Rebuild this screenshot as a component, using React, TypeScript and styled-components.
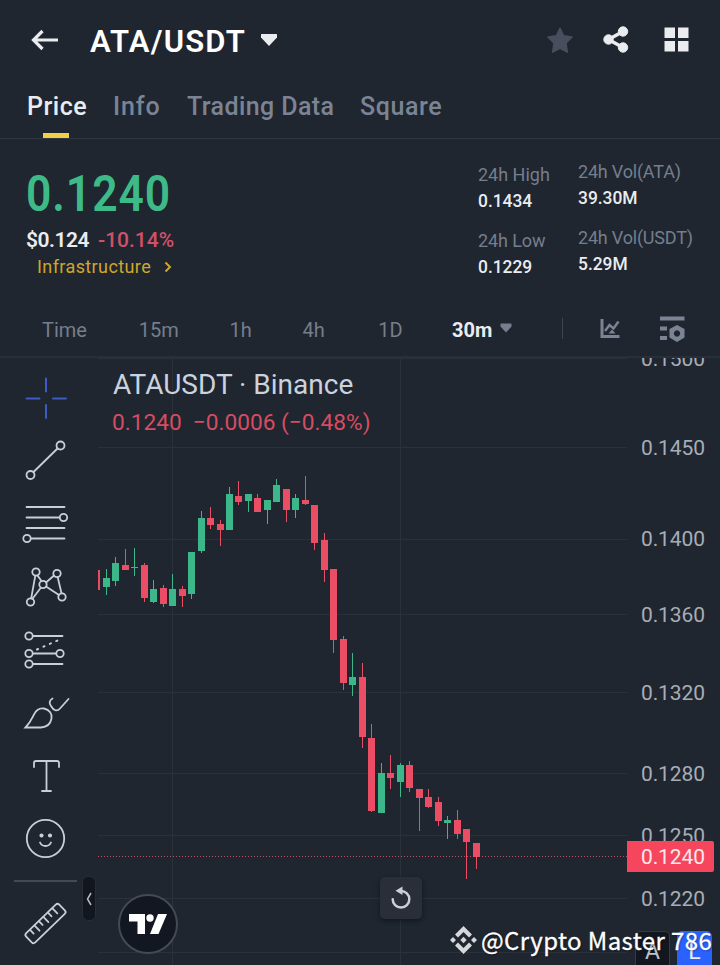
import React from "react";
import styled, { createGlobalStyle } from "styled-components";

const GlobalStyle = createGlobalStyle`
  * { box-sizing: border-box; }
  body { margin: 0; background: #1f262f; }
`;

const Page = styled.main`
  width: 720px;
  height: 965px;
  overflow: hidden;
  position: relative;
  display: flex;
  flex-direction: column;
  background: #1f262f;
  font-family: Roboto, "Liberation Sans", sans-serif;
  color: #eaecef;
`;

const Header = styled.header`
  height: 80px;
  flex: none;
  display: flex;
  align-items: center;
  padding: 0 29px 0 30px;
`;

const Title = styled.h1`
  margin: 3px 15px 0 32px;
  width: 155px;
  font-size: 31px;
  line-height: 40px;
  font-weight: 600;
  letter-spacing: 1.2px;
  white-space: nowrap;
  color: #fff;
`;

const HeaderActions = styled.div`
  margin-left: auto;
  display: flex;
  align-items: center;
  gap: 29px;
`;

const Icon = styled.svg`
  display: block;
  flex: none;
`;

const Tabs = styled.nav`
  height: 59px;
  flex: none;
  display: flex;
  gap: 27px;
  padding-left: 27px;
  border-bottom: 1px solid #2f3741;
`;

const Tab = styled.a<{ $active?: boolean; $width: number; $spacing: number }>`
  width: ${(p) => p.$width}px;
  display: flex;
  flex-direction: column;
  justify-content: space-between;
  padding-top: 12px;
  font-size: 25px;
  line-height: 30px;
  font-weight: 500;
  white-space: nowrap;
  letter-spacing: ${(p) => p.$spacing}px;
  color: ${(p) => (p.$active ? "#eaecef" : "#7b8494")};

  &::after {
    content: "";
    width: 26px;
    height: 5px;
    margin-left: 16px;
    background: ${(p) => (p.$active ? "#f0d04a" : "transparent")};
  }
`;

const Summary = styled.section`
  height: 164px;
  flex: none;
  display: flex;
  justify-content: space-between;
  padding: 0 27px 0 26px;
`;

const PriceBlock = styled.div`
  padding-top: 25px;
  display: flex;
  flex-direction: column;
`;

const BigPrice = styled.div`
  font-size: 50px;
  line-height: 60px;
  height: 60px;
  font-weight: 600;
  color: #3dba87;
  white-space: nowrap;
  letter-spacing: 1px;
  transform: scaleX(0.89);
  transform-origin: left;
`;

const ChangeRow = styled.div`
  margin-top: 3px;
  height: 26px;
  display: flex;
  gap: 9px;
  font-size: 21px;
  line-height: 26px;
`;

const FiatPrice = styled.span`
  width: 63px;
  font-weight: 600;
  letter-spacing: -0.5px;
`;

const Change = styled.span`
  font-weight: 500;
  color: #d2506a;
`;

const Category = styled.a`
  margin: 1px 0 0 11px;
  display: flex;
  align-items: center;
  gap: 13px;
  font-size: 18px;
  line-height: 25px;
  letter-spacing: 0.4px;
  color: #d0a72c;
`;

const Stats = styled.div`
  display: grid;
  grid-template-columns: 100px 115px;
`;

const StatColumn = styled.div<{ $top: number }>`
  padding-top: ${(p) => p.$top}px;
  display: flex;
  flex-direction: column;
  gap: 14px;
`;

const Stat = styled.div`
  height: 52px;
`;

const StatLabel = styled.div<{ $spacing?: number }>`
  font-size: 18px;
  line-height: 26px;
  white-space: nowrap;
  letter-spacing: ${(p) => p.$spacing ?? 0}px;
  color: #757e8c;
`;

const StatValue = styled.div`
  font-size: 19px;
  line-height: 26px;
  font-weight: 500;
  transform: scaleX(0.915);
  transform-origin: left;
`;

const Intervals = styled.nav`
  height: 53px;
  flex: none;
  display: flex;
  align-items: center;
  padding: 0 34px 0 42px;
  font-size: 20px;
  line-height: 24px;
  color: #757e8c;
`;

const Interval = styled.span<{ $width: number; $active?: boolean }>`
  width: ${(p) => p.$width}px;
  font-weight: ${(p) => (p.$active ? 700 : 400)};
  color: ${(p) => (p.$active ? "#eaecef" : "#757e8c")};
`;

const IntervalCaret = styled(Icon)`
  margin-top: -3px;
`;

const Divider = styled.i`
  width: 1px;
  height: 21px;
  margin: -2px 37px 0 50px;
  background: #3b4450;
`;

const StudyIcons = styled.div`
  display: flex;
  align-items: center;
  gap: 38px;
  margin-top: -1px;
`;

const ChartArea = styled.section`
  flex: 1;
  min-height: 0;
  display: grid;
  grid-template-columns: 98px 622px;
  border-top: 2px solid #282f39;
  position: relative;
`;

const Tools = styled.aside`
  display: flex;
  flex-direction: column;
  align-items: flex-start;
  padding: 9px 0 0 14px;
`;

const ToolButton = styled.span`
  height: 62.85px;
  width: 63px;
  display: grid;
  place-items: center;
`;

const ToolRule = styled.i`
  width: 63px;
  height: 2px;
  margin: 10px 0 11px;
  background: #434a55;
`;

const Plot = styled.div`
  position: relative;
  min-width: 0;
`;

const PlotSvg = styled.svg`
  display: block;
`;

const AxisText = styled.text<{ $tone?: string }>`
  font-family: Roboto, sans-serif;
  font-size: 21px;
  fill: ${(p) => p.$tone ?? "#a7adb8"};
`;

const Legend = styled.div`
  position: absolute;
  left: 14px;
  top: 8px;
  white-space: nowrap;
`;

const LegendTitle = styled.div`
  padding-left: 1px;
  font-size: 28px;
  line-height: 38px;
  color: #ccd2dd;
`;

const LegendValues = styled.div`
  margin-top: 1px;
  display: flex;
  gap: 11px;
  font-size: 22.7px;
  line-height: 36px;
  color: #d64c62;
`;

const CollapseHandle = styled.button`
  position: absolute;
  left: 82px;
  top: 518px;
  width: 14px;
  height: 45px;
  padding: 0;
  border: 1px solid #282d39;
  border-radius: 6px;
  background: #12161f;
  display: grid;
  place-items: center;
`;

const LogoBadge = styled.div`
  position: absolute;
  left: 20px;
  top: 536px;
  width: 60px;
  height: 60px;
  border: 2px solid #454955;
  border-radius: 50%;
  background: #131722;
  display: grid;
  place-items: center;
`;

const ResetButton = styled.button`
  position: absolute;
  left: 282px;
  top: 519px;
  width: 42px;
  height: 42px;
  padding: 0;
  border: 0;
  border-radius: 5px;
  background: #2a2e39;
  box-shadow: 0 2px 5px rgba(0, 0, 0, 0.4);
  display: grid;
  place-items: center;
`;

const ScaleButtons = styled.div`
  position: absolute;
  left: 537px;
  top: 573px;
  display: flex;
  gap: 7px;
`;

const ScaleButton = styled.button<{ $on?: boolean }>`
  width: 35px;
  height: 42px;
  padding: 0;
  border: 1px solid ${(p) => (p.$on ? "#2962ff" : "#353b46")};
  border-radius: 5px;
  background: ${(p) => (p.$on ? "#2962ff" : "#12161f")};
  color: ${(p) => (p.$on ? "#e6ebf7" : "#bcc1ca")};
  font-family: Roboto, sans-serif;
  font-size: 23px;
  line-height: 38px;
`;

const Signature = styled.div`
  position: absolute;
  left: 450px;
  top: 922px;
  display: flex;
  align-items: center;
  gap: 4px;
  white-space: nowrap;
  font-family: "Noto Sans CJK SC", sans-serif;
  font-size: 24px;
  line-height: 36px;
  letter-spacing: 0.4px;
  color: #fff;
  -webkit-text-stroke: 0.3px #fff;
  text-shadow: 1px 1px 2px rgba(0, 0, 0, 0.4);
`;

const gridLines = [358.5, 447.5, 539.5, 614.5, 692.5, 773.5, 835.5, 898.5, 952.5];

const axisLabels: [string, number][] = [
  ["0.1500", 366],
  ["0.1450", 455],
  ["0.1400", 546],
  ["0.1360", 622],
  ["0.1320", 700],
  ["0.1280", 781],
  ["0.1250", 843],
  ["0.1220", 906],
];

// left edge, wick top, body top, body bottom, wick bottom, rising
const candles: [number, number, number, number, number, boolean][] = [
  [103, 569, 578, 587, 595, true],
  [112, 557, 563, 581, 586, true],
  [122, 549, 565, 570, 570, false],
  [131, 548, 567, 568, 576, true],
  [141, 563, 565, 598, 602, false],
  [150, 580, 589, 602, 603, true],
  [160, 585, 588, 604, 607, false],
  [169, 574, 589, 606, 606, true],
  [179, 586, 589, 596, 607, false],
  [188, 552, 552, 594, 599, true],
  [198, 511, 518, 551, 553, true],
  [207, 507, 518, 525, 529, false],
  [217, 520, 524, 530, 546, false],
  [226, 487, 494, 530, 530, true],
  [235, 481, 496, 502, 505, false],
  [245, 494, 494, 501, 512, true],
  [254, 494, 498, 512, 512, false],
  [264, 500, 500, 510, 524, true],
  [273, 479, 485, 502, 502, true],
  [283, 489, 489, 510, 522, false],
  [292, 494, 498, 510, 518, true],
  [302, 476, 500, 504, 505, false],
  [311, 505, 505, 543, 550, false],
  [321, 533, 540, 570, 582, false],
  [330, 569, 569, 640, 653, false],
  [340, 636, 639, 683, 690, false],
  [349, 653, 677, 685, 696, true],
  [359, 663, 677, 737, 748, false],
  [368, 724, 738, 811, 812, false],
  [378, 763, 773, 813, 813, true],
  [387, 755, 773, 778, 789, false],
  [397, 763, 765, 782, 797, true],
  [406, 761, 765, 788, 792, false],
  [416, 789, 789, 798, 831, false],
  [425, 789, 797, 807, 808, false],
  [435, 797, 802, 821, 826, false],
  [444, 816, 820, 823, 839, true],
  [454, 810, 820, 834, 839, false],
  [463, 829, 829, 842, 879, false],
  [473, 843, 843, 857, 869, false],
];

function Chart() {
  return (
    <PlotSvg width={622} height={607} viewBox="98 358 622 607">
      <g stroke="#2a313b">
        {gridLines.map((y) => (
          <path key={y} d={`M98 ${y}H627`} />
        ))}
        <path d="M172.5 358V965M400.5 358V965" />
      </g>
      <path d="M98 856.5H627" stroke="#b05566" strokeDasharray="1 2" />
      <rect x={98} y={570} width={2} height={20} fill="#e94b62" />
      {candles.map(([x, high, top, bottom, low, rising]) => (
        <g key={x} fill={rising ? "#3bb78a" : "#eb4d64"}>
          <rect x={x + 3} y={high} width={1} height={low - high} />
          <rect x={x} y={top} width={7} height={bottom - top} />
        </g>
      ))}
      {axisLabels.map(([label, y]) => (
        <AxisText key={label} x={641} y={y} textLength={64}>
          {label}
        </AxisText>
      ))}
      <path d="M627 841h85a2 2 0 0 1 2 2v27a2 2 0 0 1-2 2h-85z" fill="#f6465d" />
      <AxisText x={641} y={864} textLength={64} $tone="#fbe9ec">
        0.1240
      </AxisText>
    </PlotSvg>
  );
}

const toolIcons: React.ReactNode[] = [
  <g key="cross" stroke="#3d5cc4" strokeWidth={2}>
    <path d="M32 11.500v13M32 38v13M12.500 31.500h13M39 31.500h13" />
  </g>,
  <g key="line">
    <circle cx={16.500} cy={45} r={4} />
    <circle cx={46.500} cy={15.500} r={4} />
    <path d="M19.500 42 43.500 18.500" />
  </g>,
  <g key="fib">
    <path d="M12.500 14h38M12.500 24.500h33M12.500 35h38M17 45.500h33.500" />
    <circle cx={49.500} cy={24.500} r={3.700} />
    <circle cx={13} cy={45.500} r={3.700} />
  </g>,
  <g key="pattern">
    <circle cx={22} cy={16} r={3.700} />
    <circle cx={43} cy={17.500} r={3.700} />
    <circle cx={29} cy={28.500} r={3.700} />
    <circle cx={16.500} cy={46} r={3.700} />
    <circle cx={48} cy={41} r={3.700} />
    <path d="M21.300 19.700 17.200 42.300M23.500 19.500 27.500 25M32 26.500 40 19.500M26.800 31.700 18.500 42.700M32 30.500 45 39M43.700 21.200 47.500 37.200" />
  </g>,
  <g key="forecast">
    <path d="M19 18h29.500M19 35.500h23M19 46h29.500" />
    <path d="M23 31.500 47 21" strokeDasharray="1.200 5.800" strokeWidth={2} />
    <circle cx={15} cy={18} r={3.700} />
    <circle cx={15} cy={35.500} r={3.700} />
    <circle cx={46} cy={35.500} r={3.700} />
    <circle cx={15} cy={46} r={3.700} />
  </g>,
  <g key="brush">
    <path d="M11.500 46.500C17 41 18 37 20 33.500C22 29 26 27 30 27.500C35.500 28.500 38.500 33 37.500 37.500C36.500 43 33 46 27 46.500Z" />
    <path d="M38.500 17.500C35 19.500 35 22.500 37 25C39.500 29.500 43 31 46 27.500L54.500 18" />
  </g>,
  <g key="text">
    <path d="M20 23v-4q0-2 2-2h21q2 0 2 2v4M32.500 17v30M28 47h9" />
  </g>,
  <g key="emoji">
    <circle cx={31.500} cy={31.500} r={18.700} />
    <circle cx={27.500} cy={28.500} r={1.200} fill="#c9ced8" />
    <circle cx={36} cy={28.500} r={1.200} fill="#c9ced8" />
    <path d="M26 35.500q1.500 3.500 5.500 3.500t5.500-3.500" />
  </g>,
];

const ToolSvg = ({ children }: { children: React.ReactNode }) => (
  <Icon width={63} height={63} viewBox="0 0 63 63" fill="none" stroke="#c9ced8" strokeWidth={1.800} strokeLinecap="round">
    {children}
  </Icon>
);

const tabs = [
  { label: "Price", width: 59, spacing: 0.5, active: true },
  { label: "Info", width: 47, spacing: 0.9 },
  { label: "Trading Data", width: 146, spacing: 0.4 },
  { label: "Square", width: 82, spacing: 0.6 },
];

const intervals: [string, number][] = [
  ["Time", 97],
  ["15m", 91],
  ["1h", 73],
  ["4h", 76],
  ["1D", 74],
];

export default function App() {
  return (
    <>
      <GlobalStyle />
      <Page>
        <Header>
          <Icon width={28} height={24} viewBox="0 0 28 24" fill="none" stroke="#eaecef" strokeWidth={3.200}>
            <path d="M12.500 3 3.500 12l9 9M3.500 12H28" />
          </Icon>
          <Title>ATA/USDT</Title>
          <Icon width={18} height={14} viewBox="0 0 18 14" fill="#eaecef">
            <path d="M1.500 1h15q.5 0 .5.500v3L9 13 1 4.500v-3q0-.5.500-.5z" />
          </Icon>
          <HeaderActions>
            <Icon width={28} height={28} viewBox="0 0 28 28" fill="#474f5e" stroke="#474f5e" strokeWidth={1.500} strokeLinejoin="round">
              <path d="M14 2.200 17.600 9.800 26 11 20 17 21.400 26.200 14 22.300 6.600 26.200 8 17 2 11 10.400 9.800z" />
            </Icon>
            <Icon width={28} height={28} viewBox="0 0 28 28" fill="#eaecef" stroke="#eaecef">
              <circle cx={5.500} cy={13.500} r={4.700} />
              <circle cx={20} cy={5.500} r={4.700} />
              <circle cx={20} cy={21.500} r={4.700} />
              <path d="M20 5.500 5.500 13.500 20 21.500" fill="none" strokeWidth={3.500} />
            </Icon>
            <Icon width={31} height={28} viewBox="0 0 31 28" fill="#eaecef">
              <path d="M4.500 1.500H15V12H4.500zM18 1.500h10.500V12H18zM4.500 15H15v10.500H4.500zM18 15h10.500v10.500H18z" />
            </Icon>
          </HeaderActions>
        </Header>

        <Tabs>
          {tabs.map((t) => (
            <Tab key={t.label} $width={t.width} $spacing={t.spacing} $active={t.active}>
              {t.label}
            </Tab>
          ))}
        </Tabs>

        <Summary>
          <PriceBlock>
            <BigPrice>0.1240</BigPrice>
            <ChangeRow>
              <FiatPrice>$0.124</FiatPrice>
              <Change>-10.14%</Change>
            </ChangeRow>
            <Category>
              Infrastructure
              <Icon width={8} height={12} viewBox="0 0 8 12" fill="none" stroke="#d0a72c" strokeWidth={2}>
                <path d="M1.500 1.500 6 6 1.500 10.500" />
              </Icon>
            </Category>
          </PriceBlock>
          <Stats>
            <StatColumn $top={23}>
              <Stat>
                <StatLabel>24h High</StatLabel>
                <StatValue>0.1434</StatValue>
              </Stat>
              <Stat>
                <StatLabel $spacing={-0.1}>24h Low</StatLabel>
                <StatValue>0.1229</StatValue>
              </Stat>
            </StatColumn>
            <StatColumn $top={20}>
              <Stat>
                <StatLabel $spacing={-0.2}>24h Vol(ATA)</StatLabel>
                <StatValue>39.30M</StatValue>
              </Stat>
              <Stat>
                <StatLabel $spacing={-0.2}>24h Vol(USDT)</StatLabel>
                <StatValue>5.29M</StatValue>
              </Stat>
            </StatColumn>
          </Stats>
        </Summary>

        <Intervals>
          {intervals.map(([label, width]) => (
            <Interval key={label} $width={width}>
              {label}
            </Interval>
          ))}
          <Interval $width={48} $active>
            30m
          </Interval>
          <IntervalCaret width={12} height={10} viewBox="0 0 12 10" fill="#757e8c">
            <path d="M.5.500h11v3L6 9.500.5 3.500z" />
          </IntervalCaret>
          <Divider />
          <StudyIcons>
            <Icon width={22} height={20} viewBox="0 0 22 20" fill="none" stroke="#7b8494" strokeWidth={3}>
              <path d="M2 0v17.500H19.500" />
              <path d="M5 12 9.500 6l4 3.500L18.500 2.500" strokeWidth={2.500} />
              <path d="M8.500 14.500 12 10.500 15.500 14.500z" fill="#7b8494" stroke="none" />
            </Icon>
            <Icon width={26} height={26} viewBox="0 0 26 26" fill="#7b8494">
              <path d="M0 .5h24.500v4H0zM0 10.500h7v4H0zM0 20h7v4H0z" />
              <path fillRule="evenodd" d="M17 9 24.500 13v8.500L17 26l-7.500-4.500V13zM17 14.300a3.200 3.200 0 1 0 .01 0z" />
            </Icon>
          </StudyIcons>
        </Intervals>

        <ChartArea>
          <Tools>
            {toolIcons.map((icon, i) => (
              <ToolButton key={i}>
                <ToolSvg>{icon}</ToolSvg>
              </ToolButton>
            ))}
            <ToolRule />
            <ToolButton>
              <ToolSvg>
                <g transform="translate(31.500 30.500) rotate(-44)">
                  <rect x={-23} y={-6.500} width={46} height={13} rx={2.500} />
                  <path d="M-15.500-6v5M-9.300-6v7M-3.100-6v5M3.100-6v7M9.300-6v5M15.500-6v7" />
                </g>
              </ToolSvg>
            </ToolButton>
          </Tools>
          <Plot>
            <Chart />
            <Legend>
              <LegendTitle>ATAUSDT · Binance</LegendTitle>
              <LegendValues>
                <span>0.1240</span>
                <span>−0.0006 (−0.48%)</span>
              </LegendValues>
            </Legend>
            <LogoBadge>
              <Icon width={38} height={20} viewBox="0 0 38 20" fill="#fff">
                <path d="M0 0h16v20H8.500V7.500H0z" />
                <circle cx={21} cy={4} r={3.700} />
                <path d="M29 0h9l-8.500 20h-8.500z" />
              </Icon>
            </LogoBadge>
            <ResetButton>
              <Icon width={24} height={24} viewBox="0 0 24 24" fill="none" stroke="#c9ced8" strokeWidth={2.500} strokeLinecap="round">
                <path d="M12 5A8.300 8.300 0 1 1 3.700 13.300" />
                <path d="M13.500.500v8.500L6.500 4.800z" fill="#c9ced8" stroke="none" />
              </Icon>
            </ResetButton>
            <ScaleButtons>
              <ScaleButton>A</ScaleButton>
              <ScaleButton $on>L</ScaleButton>
            </ScaleButtons>
          </Plot>
          <CollapseHandle>
            <Icon width={6} height={14} viewBox="0 0 6 14" fill="none" stroke="#b4bac6" strokeWidth={1.500}>
              <path d="M5 1 1.500 7 5 13" />
            </Icon>
          </CollapseHandle>
        </ChartArea>

        <Signature>
          <Icon width={27} height={28} viewBox="0 0 27 28" fill="#d5d7da">
            <path d="M13.500 0 22 8.500 19 11.500 13.500 6 8 11.500 5 8.500zM13.500 28 5 19.500 8 16.500 13.500 22 19 16.500 22 19.500zM3 11l3 3-3 3-3-3zM24 11l3 3-3 3-3-3zM13.500 10.800l3.200 3.200-3.200 3.200-3.200-3.200z" />
          </Icon>
          <span>@Crypto Master 786</span>
        </Signature>
      </Page>
    </>
  );
}
